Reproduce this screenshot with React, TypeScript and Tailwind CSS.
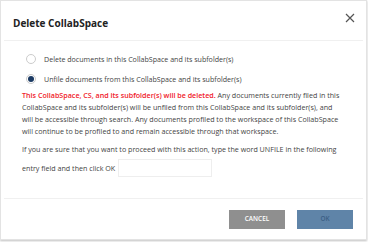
export default function App() {
  return (
    <div className="h-[242px] w-[368px] bg-white" style={{ fontFamily: '"Open Sans", sans-serif' }}>
      <div className="flex h-[240px] w-[367px] flex-col border border-[#e3e3e3] bg-white shadow-[0_1px_2px_rgba(0,0,0,0.25)]">
        <div className="mx-[3px] flex h-[40px] items-center justify-between border-b border-[#f0f0f0] pl-[9px] pr-[8px]">
          <h1 className="mt-[6px] text-[10px] font-bold text-[#222]">Delete CollabSpace</h1>
          <svg width="10" height="10" viewBox="0 0 10 10" className="mb-[6px]">
            <path d="M1 1 L9 9 M9 1 L1 9" stroke="#555" strokeWidth="1.2" />
          </svg>
        </div>

        <div className="flex-1 px-[21px] pt-[13px] text-[7.15px] text-[#444]">
          <label className="flex items-center gap-[8px] pl-[4px] text-[7.1px]">
            <span className="h-[10px] w-[10px] rounded-full border border-[#ccc]" />
            Delete documents in this CollabSpace and its subfolder(s)
          </label>
          <label className="mt-[9px] flex items-center gap-[8px] pl-[4px] text-[7.1px]">
            <span className="flex h-[10px] w-[10px] items-center justify-center rounded-full border border-[#ccc]">
              <span className="h-[6px] w-[6px] rounded-full bg-[#1b3a63]" />
            </span>
            Unfile documents from this CollabSpace and its subfolder(s)
          </label>

          <p className="mt-[5px] leading-[12px]">
            <span className="font-semibold text-[#f0202a]">
              This CollabSpace, CS, and its subfolder(s) will be deleted.
            </span>{" "}
            Any documents currently filed in this
            <br />
            CollabSpace and its subfolder(s) will be unfiled from this CollabSpace and its subfolder(s), and
            <br />
            will be accessible through search. Any documents profiled to the workspace of this CollabSpace
            <br />
            will continue to be profiled to and remain accessible through that workspace.
          </p>
          <p className="mt-[6px] leading-[12px]">
            If you are sure that you want to proceed with this action, type the word UNFILE in the following
          </p>
          <div className="mt-[4px] flex items-center gap-[3px]">
            <span>entry field and then click OK</span>
            <input className="h-[18px] w-[94px] border border-[#eee] outline-none" />
          </div>
        </div>

        <div className="mx-[3px] flex h-[41px] items-center justify-end gap-[12px] border-t border-[#f0f0f0] pr-[10px]">
          <button className="h-[19px] w-[56px] bg-[#8f8f8f] text-[6.4px] font-semibold text-white">CANCEL</button>
          <button className="h-[19px] w-[56px] bg-[#5f84a8] text-[6.4px] font-semibold text-[#3c5f86]">OK</button>
        </div>
      </div>
    </div>
  );
}
